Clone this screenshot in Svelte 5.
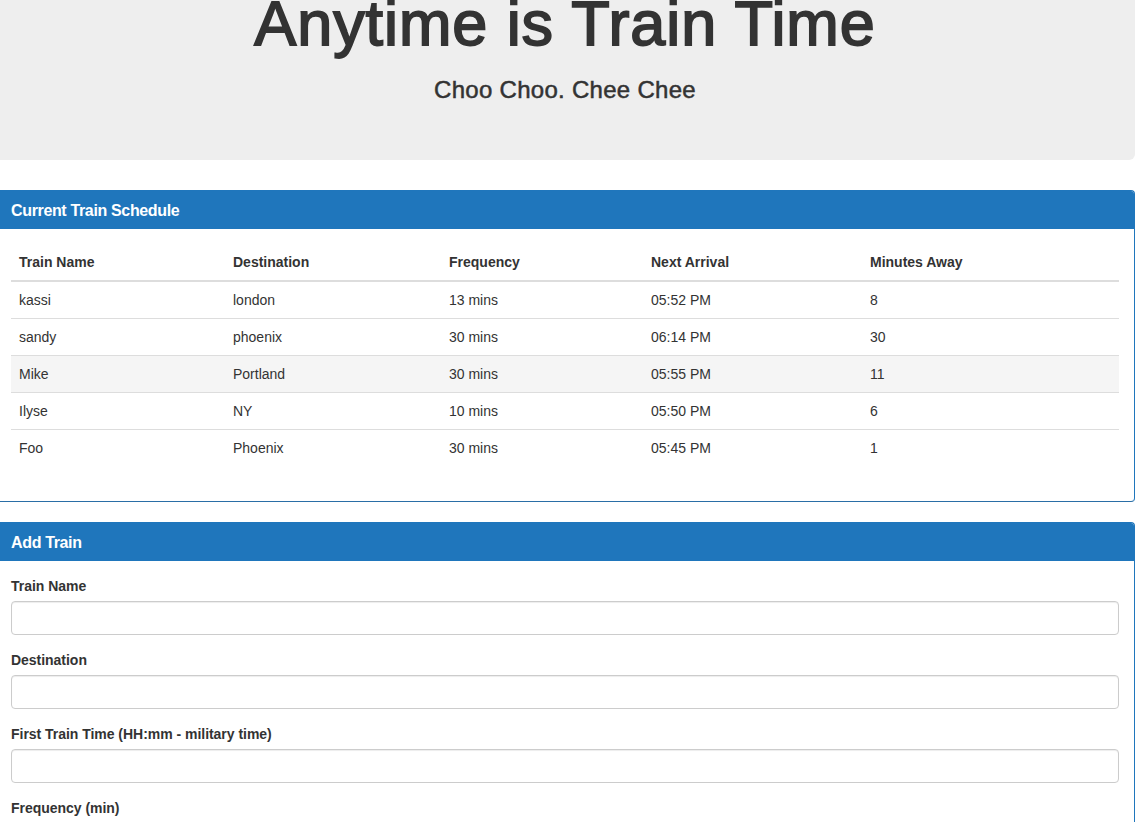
<script>
  const trains = [
    { name: 'kassi', dest: 'london', freq: '13 mins', next: '05:52 PM', away: '8' },
    { name: 'sandy', dest: 'phoenix', freq: '30 mins', next: '06:14 PM', away: '30' },
    { name: 'Mike', dest: 'Portland', freq: '30 mins', next: '05:55 PM', away: '11', hover: true },
    { name: 'Ilyse', dest: 'NY', freq: '10 mins', next: '05:50 PM', away: '6' },
    { name: 'Foo', dest: 'Phoenix', freq: '30 mins', next: '05:45 PM', away: '1' }
  ];
  const fields = ['Train Name', 'Destination', 'First Train Time (HH:mm - military time)', 'Frequency (min)'];
</script>

<div class="viewport">
  <div class="page">
    <header class="jumbotron">
      <h1>Anytime is Train Time</h1>
      <h3>Choo Choo. Chee Chee</h3>
    </header>

    <section class="panel">
      <div class="heading">Current Train Schedule</div>
      <div class="body">
        <table>
          <colgroup>
            <col class="c1" /><col class="c2" /><col class="c3" /><col class="c4" /><col />
          </colgroup>
          <thead>
            <tr>
              <th>Train Name</th><th>Destination</th><th>Frequency</th><th>Next Arrival</th><th>Minutes Away</th>
            </tr>
          </thead>
          <tbody>
            {#each trains as t}
              <tr class:hover={t.hover}>
                <td>{t.name}</td><td>{t.dest}</td><td>{t.freq}</td><td>{t.next}</td><td>{t.away}</td>
              </tr>
            {/each}
          </tbody>
        </table>
      </div>
    </section>

    <section class="panel">
      <div class="heading">Add Train</div>
      <form class="body">
        {#each fields as f}
          <div class="group">
            <label>{f}<input type="text" /></label>
          </div>
        {/each}
      </form>
    </section>
  </div>
</div>

<style>
  :global(body) {
    margin: 0;
    background: #fff;
  }
  .viewport {
    width: 1136px;
    height: 822px;
    overflow: hidden;
    position: relative;
    font-family: "Liberation Sans", Arial, sans-serif;
    font-size: 14px;
    line-height: 20px;
    color: #333;
  }
  .page {
    width: 1140px;
    margin-left: -5px;
    margin-top: -34px;
  }
  .jumbotron {
    background: #eee;
    border-radius: 6px;
    padding: 1px 0 48px;
    margin-bottom: 30px;
    text-align: center;
    height: 145px;
    box-sizing: content-box;
  }
  h1 {
    font-size: 63px;
    font-weight: 500;
    line-height: 69.3px;
    margin: 22px 0 19px;
    letter-spacing: 0.92px;
    -webkit-text-stroke: 1.8px #333;
  }
  h3 {
    font-size: 24px;
    font-weight: 500;
    line-height: 26.4px;
    margin: 0 0 10px;
    letter-spacing: 0.28px;
    -webkit-text-stroke: 0.5px #333;
  }
  .panel {
    border: 1px solid #1f76bc;
    border-bottom-color: #2a6ea6;
    border-radius: 4px;
    margin-bottom: 20px;
    background: #fff;
  }
  .heading {
    background: #1f76bc;
    color: #fff;
    font-size: 16px;
    font-weight: 700;
    line-height: 18px;
    letter-spacing: -0.35px;
    padding: 11px 15px 8px;
    border-bottom: 1px solid #1f76bc;
    border-radius: 3px 3px 0 0;
  }
  .body {
    padding: 15px;
  }
  table {
    width: 100%;
    border-collapse: collapse;
    border-spacing: 0;
    margin-bottom: 20px;
    table-layout: fixed;
  }
  .c1 { width: 214px; }
  .c2 { width: 216px; }
  .c3 { width: 202px; }
  .c4 { width: 219px; }
  th, td {
    padding: 8px;
    text-align: left;
    vertical-align: top;
    line-height: 20px;
  }
  th {
    font-weight: 700;
    border-bottom: 2px solid #ddd;
  }
  td {
    border-top: 1px solid #ddd;
  }
  tbody tr:first-child td {
    border-top: 0;
  }
  tr.hover {
    background: #f5f5f5;
  }
  .group {
    margin-bottom: 15px;
  }
  label {
    display: block;
    font-weight: 700;
    line-height: 20px;
    letter-spacing: -0.03px;
  }
  input {
    display: block;
    box-sizing: border-box;
    width: 100%;
    height: 34px;
    margin-top: 5px;
    padding: 6px 12px;
    border: 1px solid #ccc;
    border-radius: 4px;
    background: #fff;
    box-shadow: inset 0 1px 1px rgba(0, 0, 0, 0.075);
    font: inherit;
  }
</style>
